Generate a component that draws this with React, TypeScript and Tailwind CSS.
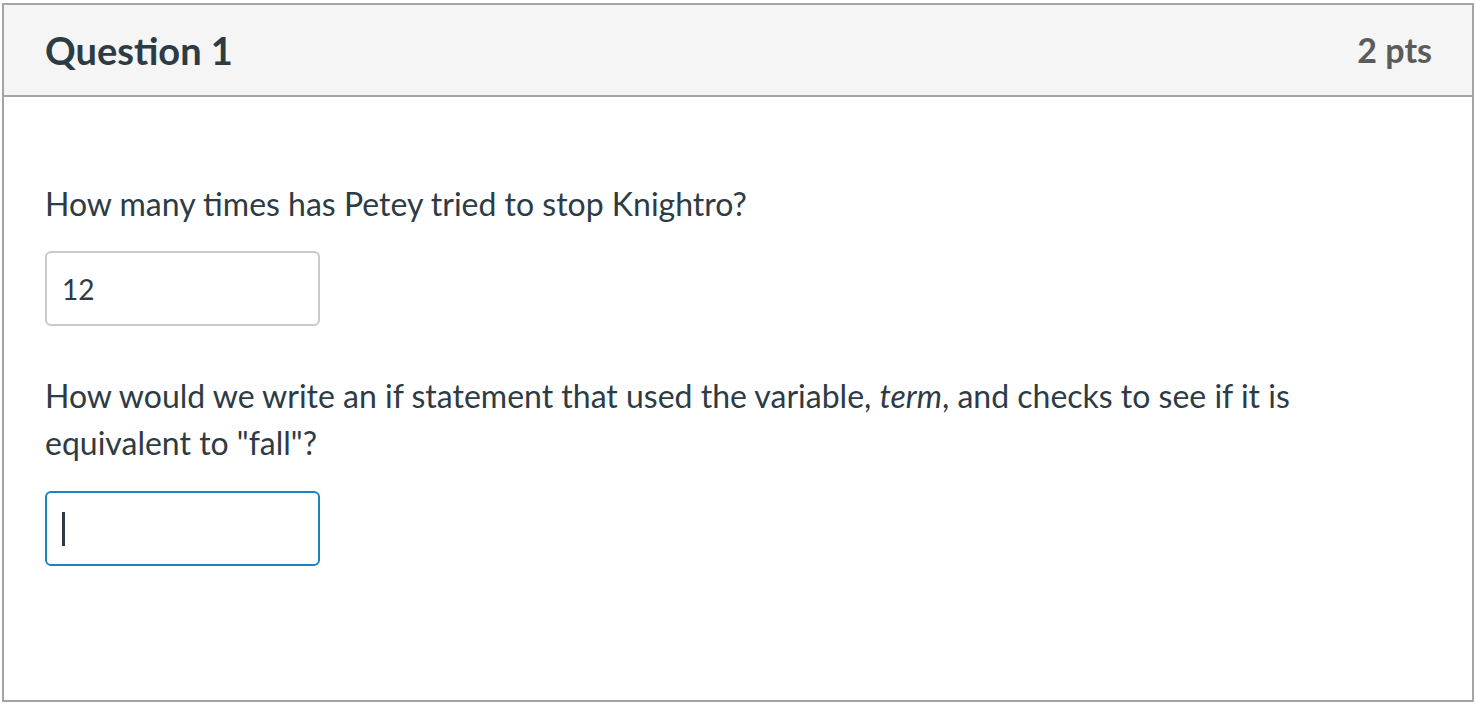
export default function App() {
  return (
    <div className="w-[1476px] h-[704px] bg-white pt-[3px] pl-[2px]" style={{ fontFamily: 'Lato, "Noto Sans", sans-serif' }}>
      <div className="w-[1472px] h-[699px] border-2 border-[#a5a5a5] flex flex-col">
        <div className="h-[92px] bg-[#f5f5f5] border-b-2 border-[#a5a5a5] flex items-center justify-between pl-[41px] pr-[40px]">
          <div className="text-[38px] font-bold text-[#2d3b45] leading-none">Question 1</div>
          <div className="text-[34px] font-bold text-[#5b5b5b] leading-none">2 pts</div>
        </div>
        <div className="pl-[41px] pt-[83px] text-[32px] text-[#2d3b45]">
          <p className="leading-[47px]">How many times has Petey tried to stop Knightro?</p>
          <div className="mt-[24px] w-[275px] h-[75px] border-2 border-[#cacaca] rounded-[6px] flex items-center pl-[15px] text-[28px]">12</div>
          <p className="mt-[46px] leading-[47px] w-[1300px]">
            How would we write an if statement that used the variable, <em>term</em>, and checks to see if it is equivalent to "fall"?
          </p>
          <div className="mt-[25px] w-[275px] h-[75px] border-2 border-[#1a83c0] rounded-[6px] flex items-center pl-[15px]">
            <div className="w-[3px] h-[34px] bg-[#2d3b45]" />
          </div>
        </div>
      </div>
    </div>
  );
}
